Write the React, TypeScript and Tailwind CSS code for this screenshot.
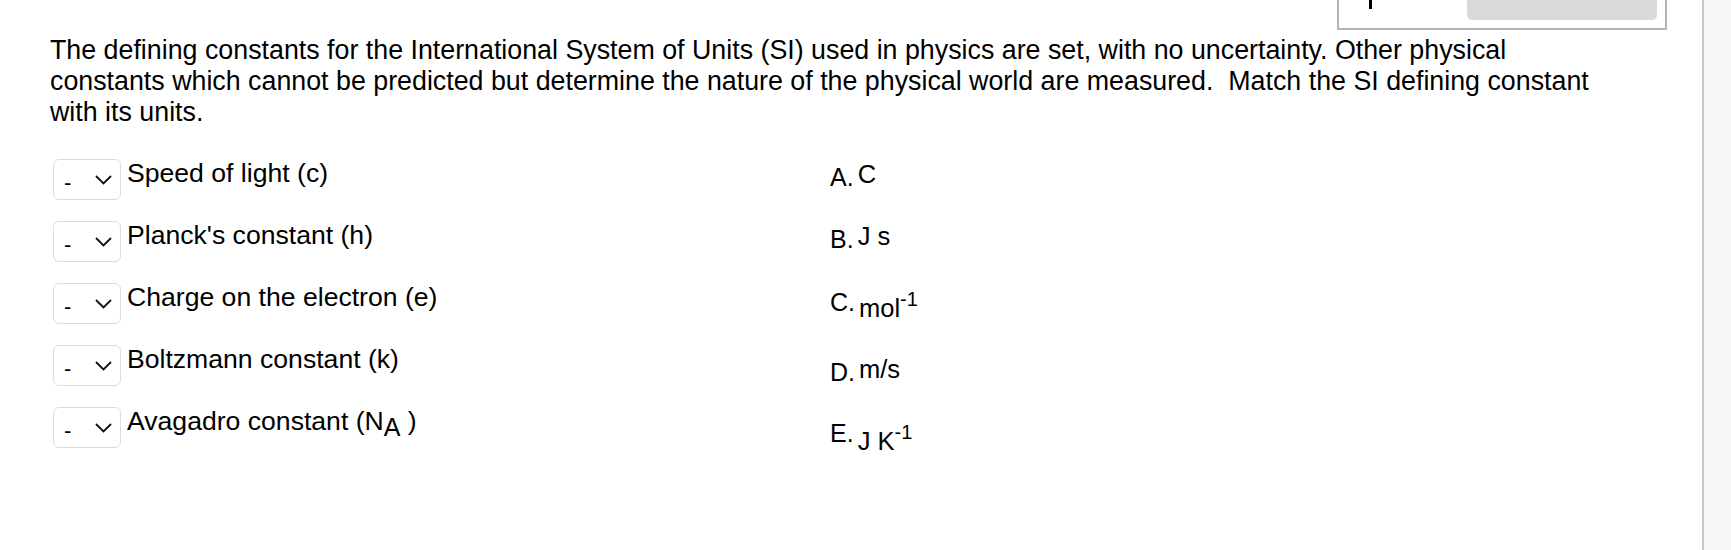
import React from 'react';

const constants = [
  { id: 'c', label: <>Speed of light (c)</> },
  { id: 'h', label: <>Planck's constant (h)</> },
  { id: 'e', label: <>Charge on the electron (e)</> },
  { id: 'k', label: <>Boltzmann constant (k)</> },
  {
    id: 'na',
    label: (
      <>
        Avagadro constant (N<sub className="text-[25px]">A</sub> )
      </>
    ),
  },
];

// row height + padding so letter and unit sit where the original table put them
const units = [
  { letter: 'A.', row: 'h-[62px]', pad: 'pt-[0px]', unit: <>C</> },
  { letter: 'B.', row: 'h-[63px]', pad: 'pt-[0px]', unit: <>J s</> },
  {
    letter: 'C.',
    row: 'h-[70px]',
    pad: 'pt-[9px]',
    unit: (
      <>
        mol<sup className="text-[20px] top-[-11px]">-1</sup>
      </>
    ),
  },
  { letter: 'D.', row: 'h-[61px]', pad: 'pt-[0px]', unit: <>m/s</> },
  {
    letter: 'E.',
    row: 'h-[62px]',
    pad: 'pt-[11px]',
    unit: (
      <>
        J K<sup className="text-[20px] top-[-11px]">-1</sup>
      </>
    ),
  },
];

const Dropdown = () => (
  <div className="w-[68px] h-[41px] shrink-0 rounded-md border border-[#dcdcdc] bg-white flex items-center justify-between pl-[10px] pr-[8px]">
    <span className="text-[22px] leading-none pt-[6px]">-</span>
    <svg width="17" height="10" viewBox="0 0 17 10" className="mt-[1px]">
      <polyline points="1,1 8.5,8.5 16,1" fill="none" stroke="#111" strokeWidth="1.8" />
    </svg>
  </div>
);

export default function App() {
  return (
    <div
      className="flex w-[1731px] h-[550px] overflow-hidden text-black"
      style={{ fontFamily: '"Liberation Sans", Arial, sans-serif' }}
    >
      <div className="flex-1 bg-white flex flex-col">
        <div className="h-[30px] flex justify-end pr-[35px]">
          <div className="w-[330px] h-[30px] border-x-2 border-b-2 border-[#b4b4b4] flex items-start pr-[8px]">
            <div className="w-[3px] h-[9px] bg-black ml-[30px]" />
            <div className="ml-auto w-[190px] h-[20px] rounded-b-[5px] bg-[#d9d9d9]" />
          </div>
        </div>

        <p className="mt-[5px] pl-[50px] w-[1600px] text-[26.8px] leading-[31px]">
          The defining constants for the International System of Units (SI) used in physics are set, with no
          uncertainty. Other physical constants which cannot be predicted but determine the nature of the physical
          world are measured.{'\u00a0'} Match the SI defining constant with its units.
        </p>

        <div className="mt-[31px] flex pl-[53px]">
          <div className="w-[777px] flex flex-col">
            {constants.map((c) => (
              <div key={c.id} className="h-[62px] flex items-start gap-[6px]">
                <Dropdown />
                <span className="text-[26.6px] leading-[31px] -mt-[1px]">{c.label}</span>
              </div>
            ))}
          </div>

          <div className="flex flex-col">
            {units.map((u) => (
              <div key={u.letter} className={`${u.row} flex items-start gap-[4px]`}>
                <span className="text-[25px] leading-[31px] pt-[3px]">{u.letter}</span>
                <span className={`text-[25.5px] leading-[31px] ${u.pad}`}>{u.unit}</span>
              </div>
            ))}
          </div>
        </div>
      </div>

      <div className="w-[2px] bg-[#c8c8c8]" />
      <div className="w-[27px] bg-[#f7f7f7]" />
    </div>
  );
}
